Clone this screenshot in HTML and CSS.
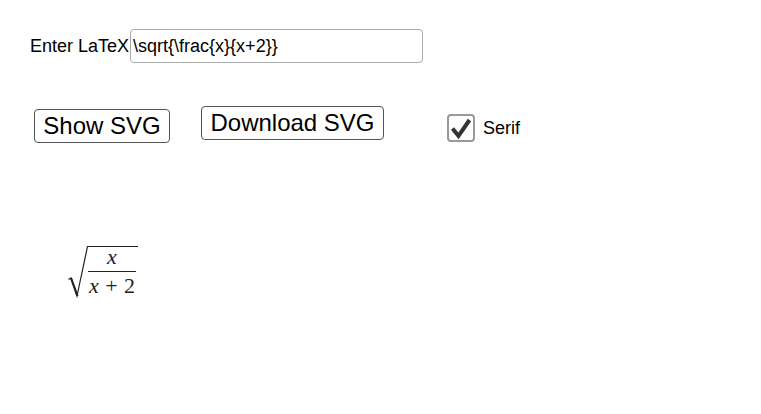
FILE: index.html
```html
<!DOCTYPE html>
<html lang="en">
<head>
    <meta charset="UTF-8">
    <meta name="viewport" content="width=device-width, initial-scale=1.0">
    <title>LaTeX to SVG</title>
    <link rel="stylesheet" href="styles.css">
</head>
<body>
    <div class="latex-row">
        <label class="latex-label" for="latex">Enter LaTeX</label>
        <input class="latex-input" id="latex" type="text" value="\sqrt{\frac{x}{x+2}}">
    </div>

    <div class="button-row">
        <button class="svg-btn show-btn">Show SVG</button>
        <button class="svg-btn download-btn">Download SVG</button>
        <div class="serif-option">
            <span class="check-box">
                <svg width="24" height="24" viewBox="0 0 24 24">
                    <path d="M3.5 12.5 L9.5 20 L20.5 4" fill="none" stroke="#333" stroke-width="4"/>
                </svg>
            </span>
            <span class="serif-label">Serif</span>
        </div>
    </div>

    <div class="formula">
        <svg class="radical" width="72" height="54" viewBox="0 0 72 54">
            <path d="M1.5 34.5 L4 33 L10 51 L20.5 1.5 H71" fill="none" stroke="#222" stroke-width="1.2"/>
            <path d="M4 33 L10.5 51" fill="none" stroke="#222" stroke-width="2.2"/>
        </svg>
        <div class="fraction">
            <span class="numerator"><i>x</i></span>
            <span class="denominator"><i>x</i> + 2</span>
        </div>
    </div>
</body>
</html>
```

FILE: styles.css
```css
body { margin: 0; width: 761px; height: 414px; overflow: hidden; background: #fff; font-family: "Liberation Sans", Arial, sans-serif; color: #000; }
.latex-row { display: flex; align-items: center; padding: 29px 0 0 30px; }
.latex-label { font-size: 18px; }
.latex-input { box-sizing: border-box; width: 293px; height: 34px; margin-left: 1px; padding: 0 2px; border: 1.5px solid #aaa; border-radius: 4px; font-family: inherit; font-size: 18px; color: #000; outline: none; }
.button-row { display: flex; align-items: flex-start; padding: 43px 0 0 34px; }
.svg-btn { box-sizing: border-box; height: 34px; padding: 0; background: #fff; border: 1.5px solid #555; border-radius: 4px; font-family: inherit; font-size: 24px; color: #000; }
.show-btn { width: 136px; margin-top: 3px; }
.download-btn { width: 183px; margin-left: 31px; }
.serif-option { display: flex; align-items: center; margin: 8px 0 0 63px; }
.check-box { box-sizing: border-box; display: flex; align-items: center; justify-content: center; width: 28px; height: 28px; border: 2px solid #999; border-radius: 4px; background: #fff; }
.serif-label { margin-left: 8px; font-size: 18px; }
.formula { display: flex; align-items: flex-start; width: 72px; margin: 102px 0 0 67px; position: relative; }
.fraction { position: absolute; left: 21px; top: 0; width: 48px; display: flex; flex-direction: column; align-items: center; font-family: "Liberation Serif", "Times New Roman", serif; font-size: 22px; color: #222; }
.numerator { line-height: 24px; height: 26px; }
.denominator { width: 100%; text-align: center; word-spacing: 1px; line-height: 27px; border-top: 1px solid #222; }
```
